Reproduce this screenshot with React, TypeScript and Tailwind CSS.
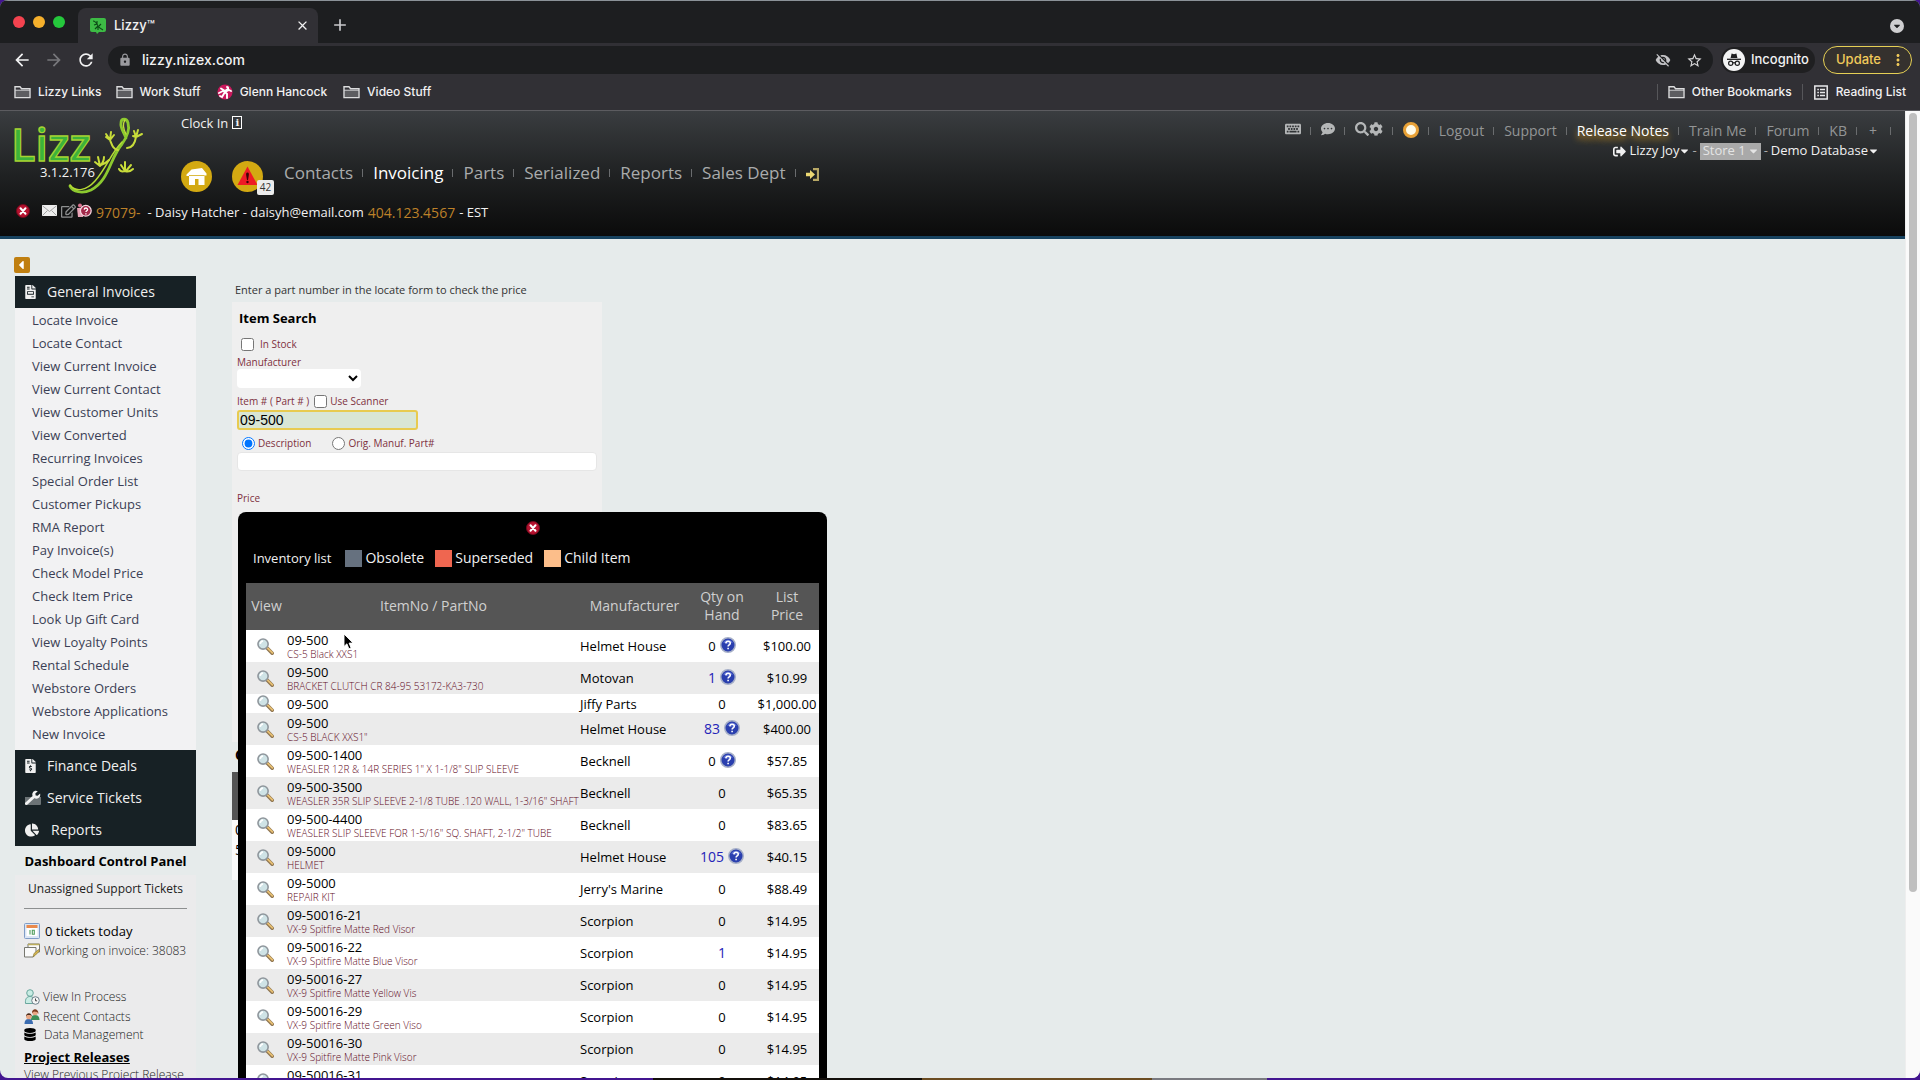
import React from "react";
import {
  FaCaretDown,
  FaCog,
  FaCommentDots,
  FaDatabase,
  FaKeyboard,
  FaSearch,
  FaSignOutAlt,
  FaChartPie,
  FaFileInvoice,
  FaFileInvoiceDollar,
  FaRegEdit,
} from "react-icons/fa";
import {
  MdArrowBack,
  MdArrowForward,
  MdRefresh,
  MdLock,
  MdVisibilityOff,
  MdStarBorder,
  MdClose,
  MdAdd,
  MdMoreVert,
} from "react-icons/md";

/* ---------- icons ---------- */

function Folder() {
  return (
    <svg className="h-[14px] w-[17px]" viewBox="0 0 17 14" fill="none" stroke="#dcdcde" strokeWidth="1.4">
      <path d="M1.500 5h14v7h-14z" fill="#5d5d61" stroke="none" />
      <path d="M1 12.600V1.800h5l1.600 1.900H16v8.900H1z" />
      <path d="M1 5.200h15" strokeWidth="0.900" />
    </svg>
  );
}

function ReadingListIcon() {
  return (
    <svg className="h-[15px] w-[14px]" viewBox="0 0 14 15" fill="none" stroke="#e8e8ea" strokeWidth="1.5">
      <rect x="0.8" y="1" width="12.4" height="13" />
      <path d="M3.3 4.5h1.6M3.3 7.5h1.6M3.3 10.5h1.6M6 4.5h5M6 7.5h5M6 10.5h5" />
    </svg>
  );
}

function Favicon() {
  return (
    <svg className="h-4 w-4" viewBox="0 0 16 16">
      <path d="M2 0h12a2 2 0 0 1 2 2v10a2 2 0 0 1-2 2H9l-2 2-1-2H2a2 2 0 0 1-2-2V2a2 2 0 0 1 2-2z" fill="#3dbb45" />
      <path d="M3 3c3 0 4 3 5 5s3 3 5 4M7 3v3l-3 1M11 6l-2 2M5 11l3-3M8 8v4" stroke="#0c4a16" strokeWidth="1.1" fill="none" />
    </svg>
  );
}

function GlennIcon() {
  return (
    <svg className="h-4 w-4" viewBox="0 0 16 16">
      <circle cx="8" cy="8" r="7.6" fill="#c9185c" />
      <path d="M10 3c1.5 0 1.6 2 .3 2.4L8 7 4 4.5M2 9l4-2 2 1 4-2 2 1M8 8l-3 5-2-1M8 8l2 2v4" stroke="#fff" strokeWidth="1.9" fill="none" strokeLinecap="round" />
    </svg>
  );
}

function IncognitoIcon() {
  return (
    <svg className="h-[22px] w-[22px]" viewBox="0 0 22 22">
      <circle cx="11" cy="11" r="11" fill="#f3f3f4" />
      <path d="M7.6 9l1-4.4 2.4.6 2.4-.6 1 4.400z" fill="#1f1f21" />
      <path d="M4 10.300h14" stroke="#1f1f21" strokeWidth="1.300" />
      <g fill="none" stroke="#1f1f21" strokeWidth="1.200">
        <circle cx="7.700" cy="14.300" r="2.100" />
        <circle cx="14.300" cy="14.300" r="2.100" />
        <path d="M9.800 14c.8-.6 1.600-.6 2.400 0" />
      </g>
    </svg>
  );
}

function Logo() {
  return (
    <svg className="h-[86px] w-[140px]" viewBox="0 0 140 86" role="img" aria-label="Lizzy">
      <text
        x="6"
        y="50"
        fontFamily="'Open Sans', sans-serif"
        fontWeight="600"
        fontSize="45"
        fill="#3db33a"
        stroke="#a5d432"
        strokeWidth="1.300"
      >
        Lizz
      </text>
      <g fill="none" strokeLinecap="round" transform="translate(-4 -2)">
        <path d="M69 77c3 6 12 8 21 4 18-9 19-32 31-46 5-7 8-14 6-21-1-5-7-5-7 0-1 5 3 9 5 15" stroke="#8cc92f" strokeWidth="2.800" />
        <path d="M69 76c6 8 17 5 25-4 12-14 16-28 27-39" stroke="#b6dc34" strokeWidth="1.500" />
        <path d="M124 11c-3 4-1 10 1 14" stroke="#c3de3a" strokeWidth="1.300" />
        <path d="M117 41c-5-1-6-5-8-10M109 31l-4-6M109 31l1-8M109 31l4-5M109 31l-4-3" stroke="#c8dc3a" strokeWidth="2" />
        <path d="M126 39c6 0 8-5 9-11M135 28l-2-6M135 28l2-7M135 28l6-3M135 28l-3-1" stroke="#c8dc3a" strokeWidth="2" />
        <path d="M99 57l-2-9M99 57c3-3 4-6 4-9M100 56c3-1 6-3 8-5M99 57l-5-4" stroke="#c8dc3a" strokeWidth="2" />
        <path d="M124 62l-4-6M124 62v-9M125 62l5-6M124 62c-3 1-5 0-6-2M124 62c3 1 6 0 8-2" stroke="#c8dc3a" strokeWidth="2" />
      </g>
      <text x="35" y="66" fontFamily="'Open Sans', sans-serif" fontSize="13" fill="#f4f4f4">
        3.1.2.176
      </text>
    </svg>
  );
}

function HomeIcon() {
  return (
    <svg className="h-[31px] w-[31px]" viewBox="0 0 31 31">
      <circle cx="15.500" cy="15.500" r="15.500" fill="#d3a912" />
      <path d="M5.500 13.500l5-5L21 7l4.500 5.500v2h-2V24h-6v-6h-3.500v6H8v-9H5.500z" fill="#fff" />
      <path d="M8 14.500h15.500" stroke="#d3a912" strokeWidth="0.800" />
    </svg>
  );
}

function AlertIcon() {
  return (
    <svg className="h-[31px] w-[31px]" viewBox="0 0 31 31">
      <circle cx="15.500" cy="15.500" r="15.500" fill="#d3a912" />
      <path d="M15.500 5.500L25.500 24h-20z" fill="#ee1c25" />
      <path d="M15.500 11.500c1.500 0 1.600 1.500 1.200 3.500l-.7 4h-1l-.7-4c-.4-2-.3-3.500 1.200-3.500z" fill="#3a0507" />
      <circle cx="15.500" cy="21" r="1.200" fill="#3a0507" />
    </svg>
  );
}

function ExitIcon() {
  return (
    <svg className="h-[13px] w-[13px]" viewBox="0 0 13 13">
      <path d="M7 1.200h5v10.600H7" fill="none" stroke="#b7a765" strokeWidth="2.200" />
      <path d="M0 4.800h4V2l5 4.500L4 11V8.200H0z" fill="#ecd873" />
    </svg>
  );
}

function CloseBadge() {
  return (
    <svg className="h-[14px] w-[14px]" viewBox="0 0 14 14">
      <circle cx="7" cy="7" r="6.500" fill="#b5122f" stroke="#6e0a1c" />
      <path d="M4.500 4.300l5 5.400M9.500 4.300l-5 5.400" stroke="#fff" strokeWidth="2" strokeLinecap="round" />
    </svg>
  );
}

function MailIcon() {
  return (
    <svg className="h-[11px] w-[15px]" viewBox="0 0 15 11">
      <rect width="15" height="11" fill="#ededed" />
      <path d="M.5.800l7 5.700 7-5.700M.5 10.500l5-5M14.500 10.500l-5-5" stroke="#9a9a9a" fill="none" strokeWidth="0.900" />
    </svg>
  );
}

function HelpPerson() {
  return (
    <svg className="h-[15px] w-[15px]" viewBox="0 0 15 15">
      <circle cx="3" cy="2.500" r="2" fill="#d8728e" />
      <path d="M0 5h6v9H1z" fill="#e7a3b6" />
      <circle cx="8.800" cy="7.800" r="5.400" fill="#a3294a" stroke="#f3d5dd" strokeWidth="1.300" />
      <path d="M7.200 6.600c.1-2.200 3.500-2 3.400-.1 0 1.300-1.700 1.100-1.700 2.600M8.900 10.200v1.200" stroke="#fff" strokeWidth="1.300" fill="none" />
    </svg>
  );
}

function HelpIcon() {
  return (
    <svg className="mb-0.5 h-4 w-4" viewBox="0 0 15 15">
      <circle cx="7.500" cy="7.500" r="6.800" fill="#2a3fae" stroke="#a7b0c8" strokeWidth="1.400" />
      <path d="M3 5.500a5 5 0 0 1 9 0 8 4 0 0 1-9 0z" fill="#6c80de" opacity="0.700" />
      <path d="M5.500 6c.1-2.700 4.200-2.600 4.100-.2 0 1.600-2 1.400-2 3M7.600 10v1.500" stroke="#fff" strokeWidth="1.500" fill="none" />
    </svg>
  );
}

function MagnifierIcon() {
  return (
    <svg className="h-[17px] w-[17px]" viewBox="0 0 16 16">
      <path d="M9.500 9.500l4.800 4.800" stroke="#8d7450" strokeWidth="3.400" strokeLinecap="round" />
      <path d="M10 9.500l4.500 4.500" stroke="#e7bf72" strokeWidth="1.700" strokeLinecap="round" />
      <circle cx="5.700" cy="5.700" r="4.800" fill="#cfe3e6" stroke="#8f969c" strokeWidth="1.500" />
      <path d="M3 5.500c.3-1.500 1.200-2.400 2.700-2.600" stroke="#fff" strokeWidth="1.500" fill="none" />
    </svg>
  );
}

function ServiceIcon() {
  return (
    <svg className="h-4 w-4" viewBox="0 0 16 16">
      <path d="M0 7h16v7a1 1 0 0 1-1 1H1a1 1 0 0 1-1-1z" fill="#6c7376" />
      <path d="M1.500 13.500l6.500-6" stroke="#f2f2f2" strokeWidth="3" strokeLinecap="round" />
      <path d="M12.800 1.300l-2.500 2.200.4 1.900 2 .3 2.400-2.100c.5 2-.2 3.600-1.600 4.500-1.500 1-3.400.7-4.700-.3-1.800-1.700-2-4-.8-5.600 1.100-1.400 3-1.900 4.800-.9z" fill="#f2f2f2" />
    </svg>
  );
}

function CalendarIcon() {
  return (
    <svg className="h-4 w-4 shrink-0" viewBox="0 0 16 16">
      <rect x="0.500" y="0.500" width="15" height="15" rx="1" fill="#dbe6f5" stroke="#7f9cc6" />
      <rect x="2.500" y="2" width="11" height="3" fill="#e98a4d" />
      <rect x="2.500" y="5" width="11" height="8" fill="#fff" />
      <path d="M6 7v4.500M8.300 7.300h2v4h-2z" stroke="#4f9d5d" strokeWidth="1.100" fill="none" />
    </svg>
  );
}

function NotesIcon() {
  return (
    <svg className="h-4 w-4 shrink-0" viewBox="0 0 16 16" fill="#fafafa" stroke="#77776f">
      <path d="M4 1h11.500v8H4z" />
      <path d="M4 1.500h11.500" stroke="#bcae5c" strokeWidth="1.500" />
      <path d="M.5 4.500H12V11l-3 3H.5z" />
      <path d="M9 14l1-3.500 4.500-4 1 1.500-4.500 4.500z" fill="#d9b84f" stroke="#8a7b3d" strokeWidth="0.700" />
    </svg>
  );
}

function ProcessIcon() {
  return (
    <svg className="h-4 w-4 shrink-0" viewBox="0 0 16 16" fill="#c9ece4" stroke="#6aa79e">
      <path d="M1.500 14.500c-.5-5 1.500-7 4.500-7s5 2 4.500 7z" />
      <circle cx="6" cy="4" r="3.300" />
      <circle cx="11.500" cy="11.500" r="3.800" fill="#f6f6f6" stroke="#6c7f8a" />
      <path d="M11.500 9.500v2.300h1.600" fill="none" stroke="#444" />
    </svg>
  );
}

function PeopleIcon() {
  return (
    <svg className="h-4 w-4 shrink-0" viewBox="0 0 16 16">
      <path d="M7 11c0-4 2-5 4-5s4.500 1 4.500 5z" fill="#3d8f57" />
      <circle cx="11" cy="3.500" r="2.800" fill="#e8a684" />
      <path d="M8 4c0-5 6.500-5 6.500 1l-1.300-2-3.200-.5z" fill="#7d3b1f" />
      <path d="M.5 15c0-4 2-5 4.200-5s4.300 1 4.300 5z" fill="#3a6bb0" />
      <circle cx="4.800" cy="7.500" r="2.800" fill="#e8a684" />
      <path d="M2 7.500c0-4.500 5.800-4.500 5.800 0L6.500 6H3.200z" fill="#4a2c1c" />
    </svg>
  );
}

function PointerIcon() {
  return (
    <svg className="h-[18px] w-[12px]" viewBox="0 0 12 18">
      <path d="M1 1v12.500l2.900-2.700 2 5 2.200-.9-2-4.800h4z" fill="#000" stroke="#fff" strokeWidth="0.900" />
    </svg>
  );
}

/* ---------- data ---------- */

const mainNav = ["Contacts", "Invoicing", "Parts", "Serialized", "Reports", "Sales Dept"];
const utilNav = ["Logout", "Support", "Release Notes", "Train Me", "Forum", "KB", "+"];

const invoiceLinks = [
  "Locate Invoice",
  "Locate Contact",
  "View Current Invoice",
  "View Current Contact",
  "View Customer Units",
  "View Converted",
  "Recurring Invoices",
  "Special Order List",
  "Customer Pickups",
  "RMA Report",
  "Pay Invoice(s)",
  "Check Model Price",
  "Check Item Price",
  "Look Up Gift Card",
  "View Loyalty Points",
  "Rental Schedule",
  "Webstore Orders",
  "Webstore Applications",
  "New Invoice",
];

type Item = { no: string; desc: string; maker: string; qty: number; help?: boolean; price: string };

const items: Item[] = [
  { no: "09-500", desc: "CS-5 Black XXS1", maker: "Helmet House", qty: 0, help: true, price: "$100.00" },
  { no: "09-500", desc: "BRACKET CLUTCH CR 84-95 53172-KA3-730", maker: "Motovan", qty: 1, help: true, price: "$10.99" },
  { no: "09-500", desc: "", maker: "Jiffy Parts", qty: 0, price: "$1,000.00" },
  { no: "09-500", desc: 'CS-5 BLACK XXS1"', maker: "Helmet House", qty: 83, help: true, price: "$400.00" },
  { no: "09-500-1400", desc: 'WEASLER 12R & 14R SERIES 1" X 1-1/8" SLIP SLEEVE', maker: "Becknell", qty: 0, help: true, price: "$57.85" },
  { no: "09-500-3500", desc: 'WEASLER 35R SLIP SLEEVE 2-1/8 TUBE .120 WALL, 1-3/16" SHAFT', maker: "Becknell", qty: 0, price: "$65.35" },
  { no: "09-500-4400", desc: 'WEASLER SLIP SLEEVE FOR 1-5/16" SQ. SHAFT, 2-1/2" TUBE', maker: "Becknell", qty: 0, price: "$83.65" },
  { no: "09-5000", desc: "HELMET", maker: "Helmet House", qty: 105, help: true, price: "$40.15" },
  { no: "09-5000", desc: "REPAIR KIT", maker: "Jerry's Marine", qty: 0, price: "$88.49" },
  { no: "09-50016-21", desc: "VX-9 Spitfire Matte Red Visor", maker: "Scorpion", qty: 0, price: "$14.95" },
  { no: "09-50016-22", desc: "VX-9 Spitfire Matte Blue Visor", maker: "Scorpion", qty: 1, price: "$14.95" },
  { no: "09-50016-27", desc: "VX-9 Spitfire Matte Yellow Vis", maker: "Scorpion", qty: 0, price: "$14.95" },
  { no: "09-50016-29", desc: "VX-9 Spitfire Matte Green Viso", maker: "Scorpion", qty: 0, price: "$14.95" },
  { no: "09-50016-30", desc: "VX-9 Spitfire Matte Pink Visor", maker: "Scorpion", qty: 0, price: "$14.95" },
  { no: "09-50016-31", desc: "VX-9 Spitfire Matte", maker: "Scorpion", qty: 0, price: "$14.95" },
];

/* ---------- browser frame ---------- */

function BrowserChrome() {
  return (
    <div className="shrink-0 border-b border-[#5c5c60] bg-[#313035] font-['Inter',sans-serif] text-[#f1f1f2]">
      <div className="flex h-[43px] items-end border-t border-[#8b9298] bg-[#1d1e20]">
        <div className="flex h-[43px] items-center gap-2 pr-[13px] pl-[13px]">
          <span className="h-3 w-3 rounded-full bg-[#f4434f]" />
          <span className="h-3 w-3 rounded-full bg-[#f6b02c]" />
          <span className="h-3 w-3 rounded-full bg-[#25c83c]" />
        </div>
        <div className="flex h-[35px] w-[240px] items-center rounded-t-lg bg-[#313035] pr-2 pl-3">
          <Favicon />
          <span className="ml-2 flex-1 text-[13px] font-medium">Lizzy™</span>
          <button aria-label="Close tab">
            <MdClose className="h-[15px] w-[15px]" />
          </button>
        </div>
        <button aria-label="New tab" className="mb-2 ml-3">
          <MdAdd className="h-5 w-5 text-[#c9c9cc]" />
        </button>
        <button aria-label="Search tabs" className="mr-4 mb-2.5 ml-auto flex h-[14px] w-[14px] items-center justify-center rounded-full bg-[#cfcfd1] text-[#1d1e20]">
          <FaCaretDown className="h-2.5 w-2.5" />
        </button>
      </div>
      <div className="flex h-[34px] items-center pr-2 pl-3">
        <button aria-label="Back"><MdArrowBack className="h-5 w-5" /></button>
        <button aria-label="Forward" className="ml-3"><MdArrowForward className="h-5 w-5 text-[#77777b]" /></button>
        <button aria-label="Reload" className="ml-3"><MdRefresh className="h-5 w-5" /></button>
        <div className="ml-3 flex h-7 flex-1 items-center rounded-full bg-[#1d1e20] px-[10px]">
          <MdLock className="h-[14px] w-[14px] text-[#9a9a9e]" />
          <input aria-label="Address" className="ml-2.5 flex-1 bg-transparent text-sm font-medium outline-none" defaultValue="lizzy.nizex.com" />
          <MdVisibilityOff className="h-4 w-4 text-[#c4c4c7]" />
          <MdStarBorder className="ml-[15px] h-[17px] w-[17px] text-[#d6d6d8]" />
        </div>
        <div className="ml-2 flex h-[26px] items-center gap-1.5 rounded-full bg-[#1f1f21] pr-1.5 pl-0.5">
          <IncognitoIcon />
          <span className="text-[13px] font-medium">Incognito</span>
        </div>
        <button className="ml-2 flex h-7 items-center gap-2 rounded-full border border-[#e5cf55] bg-[#35312e] pr-1 pl-3 text-[13px] font-medium text-[#f0c95a]">
          Update <MdMoreVert className="h-[18px] w-[18px]" />
        </button>
      </div>
      <nav className="flex h-[33px] items-center pr-[14px] pb-[3px] pl-[14px] text-xs font-medium">
        <a href="#" className="flex items-center gap-[7px]"><Folder />Lizzy Links</a>
        <a href="#" className="ml-[14px] flex items-center gap-[7px]"><Folder />Work Stuff</a>
        <a href="#" className="ml-4 flex items-center gap-[7px]"><GlennIcon />Glenn Hancock</a>
        <a href="#" className="ml-4 flex items-center gap-[7px]"><Folder />Video Stuff</a>
        <a href="#" className="ml-auto flex h-4 items-center gap-[7px] border-l border-[#56565a] pl-2.5"><Folder />Other Bookmarks</a>
        <a href="#" className="ml-2.5 flex h-4 items-center gap-2 border-l border-[#56565a] pl-[11px]"><ReadingListIcon />Reading List</a>
      </nav>
    </div>
  );
}

/* ---------- app header ---------- */

function Divider() {
  return <span className="mr-[10px] ml-[9px] h-2 w-px bg-[#6a6c6e]" />;
}

function TopHeader() {
  return (
    <header className="flex h-[128px] shrink-0 flex-col border-b-[3px] border-[#17425f] bg-linear-to-b from-[#3a3d40] via-[#202223] to-[#0b0b0b] text-[#f1f1f1]">
      <div className="flex h-[86px]">
        <a href="#" className="w-[181px] pl-[5px]"><Logo /></a>
        <div className="flex flex-col">
          <a href="#" className="mt-[3px] flex items-center gap-1 text-[13px] leading-[18px]">
            Clock In
            <span className="mb-px flex h-[13px] w-[10px] items-center justify-center border border-white font-['DejaVu_Serif',serif] text-[10px] font-bold">i</span>
          </a>
          <nav className="mt-[21px] flex items-center text-[17px] leading-[31px] text-[#a9abac]">
            <a href="#" aria-label="Home" className="mt-2"><HomeIcon /></a>
            <a href="#" aria-label="Alerts" className="relative mt-2 mr-[21px] ml-5">
              <AlertIcon />
              <span className="absolute top-[19px] left-[25px] flex h-[15px] w-[17px] items-center justify-center rounded-xs bg-[#ececec] text-[10px] text-[#333]">42</span>
            </a>
            {mainNav.map((label) => (
              <React.Fragment key={label}>
                <a href="#" className={label === "Invoicing" ? "font-medium text-white" : ""}>{label}</a>
                <Divider />
              </React.Fragment>
            ))}
            <a href="#" aria-label="Exit" className="mt-1"><ExitIcon /></a>
          </nav>
        </div>
        <div className="ml-auto flex flex-col items-end pt-[10px] pr-1">
          <nav className="flex h-[19px] items-center text-sm text-[#939596]">
            <FaKeyboard className="mb-1 h-4 w-4 text-[#b4b6b7]" />
            <Divider />
            <FaCommentDots className="mb-1 h-[14px] w-[14px] text-[#b4b6b7]" />
            <Divider />
            <FaSearch className="mb-1 h-[14px] w-[14px] text-[#b4b6b7]" />
            <FaCog className="mb-1 h-[14px] w-[14px] text-[#b4b6b7]" />
            <Divider />
            <span className="mb-0.5 h-4 w-4 rounded-full border-[3px] border-[#e8a136] bg-[#fffbe8]" />
            <Divider />
            {utilNav.map((label) => (
              <React.Fragment key={label}>
                <a
                  href="#"
                  className={label === "Release Notes" ? "font-medium text-white [text-shadow:0_4px_6px_#d89a1c]" : label === "+" ? "pr-1 pl-0.5" : ""}
                >
                  {label}
                </a>
                <Divider />
              </React.Fragment>
            ))}
          </nav>
          <div className="mt-px mr-[23px] flex h-5 items-center gap-[3px] text-[13px]">
            <FaSignOutAlt className="h-[13px] w-[13px]" />
            <button className="flex items-center gap-px">Lizzy Joy <FaCaretDown className="h-3 w-[9px]" /></button>
            <span className="text-[#aaa]">-</span>
            <button className="flex h-[17px] items-center gap-[3px] bg-[#a9a9a9] px-[3px] text-[#e4e4e4]">Store 1 <FaCaretDown className="h-3 w-[9px]" /></button>
            <span className="text-[#aaa]">-</span>
            <button className="flex items-center gap-px">Demo Database <FaCaretDown className="h-3 w-[9px]" /></button>
          </div>
        </div>
      </div>
      <div className="flex h-[31px] items-center pl-4 text-[13px]">
        <button aria-label="Clear contact" className="mb-1"><CloseBadge /></button>
        <span className="mb-1 ml-3 flex items-center"><MailIcon /></span>
        <FaRegEdit className="mb-1 ml-1 h-[14px] w-[15px] text-[#8d8f90]" />
        <span className="mb-1 ml-px"><HelpPerson /></span>
        <a href="#" className="ml-1 text-sm text-[#bd8129]">97079-</a>
        <span className="ml-[7px]">- Daisy Hatcher - daisyh@email.com</span>
        <a href="#" className="mx-1 text-sm text-[#bd8129]">404.123.4567</a>
        <span>- EST</span>
      </div>
    </header>
  );
}

/* ---------- sidebar ---------- */

function SectionTitle({ icon, children }: { icon: React.ReactNode; children: React.ReactNode }) {
  return (
    <button className="flex h-8 w-full items-center gap-1.5 bg-[#172125] px-2.5 text-left text-sm text-[#f0f0f0]">
      <span className="flex min-w-4 shrink-0">{icon}</span>
      {children}
    </button>
  );
}

function Sidebar() {
  return (
    <aside className="w-[181px] shrink-0">
      <button aria-label="Collapse menu" className="mt-[18px] -ml-px flex h-4 w-4 items-center justify-center rounded-xs bg-[#c07f10] text-white">
        <FaCaretDown className="h-[14px] w-[14px] rotate-90" />
      </button>
      <div className="mt-[3px]">
        <SectionTitle icon={<FaFileInvoice className="h-[14px] w-[11px]" />}>General Invoices</SectionTitle>
      </div>
      <ul className="bg-[#f2f2f3] pt-px pb-1">
        {invoiceLinks.map((label) => (
          <li key={label} className="h-[23px] pl-[17px] text-[13px] leading-[23px] text-[#3b3f55]">
            <a href="#">{label}</a>
          </li>
        ))}
      </ul>
      <SectionTitle icon={<FaFileInvoiceDollar className="h-[14px] w-[11px]" />}>Finance Deals</SectionTitle>
      <SectionTitle icon={<ServiceIcon />}>Service Tickets</SectionTitle>
      <SectionTitle icon={<FaChartPie className="mr-1.5 h-[14px] w-[14px]" />}>Reports</SectionTitle>
      <h2 className="h-[29px] text-center text-[13px] leading-[31px] font-bold text-black">Dashboard Control Panel</h2>
      <div className="bg-[#ebebec] px-[9px] pt-1 text-xs leading-5 text-[#222]">
        <a href="#" className="block text-center">Unassigned Support Tickets</a>
        <hr className="mt-[9px] mb-3 border-[#8d8f90]" />
        <p className="flex items-center gap-[5px] text-[13px] leading-5 text-black"><CalendarIcon />0 tickets today</p>
        <a href="#" className="flex items-center gap-1 whitespace-nowrap font-light"><NotesIcon />Working on invoice: 38083</a>
        <a href="#" className="mt-[26px] flex items-center gap-[3px] font-light"><ProcessIcon />View In Process</a>
        <a href="#" className="flex items-center gap-[3px] font-light"><PeopleIcon />Recent Contacts</a>
        <a href="#" className="flex h-[15px] items-center gap-2 font-light"><FaDatabase className="h-[13px] w-3 text-black" />Data Management</a>
        <h3 className="mt-[5px] text-[13px] leading-5 font-bold text-black underline">Project Releases</h3>
        <a href="#" className="block whitespace-nowrap leading-4 font-light">View Previous Project Release</a>
      </div>
    </aside>
  );
}

/* ---------- content ---------- */

function SearchForm() {
  const field = "flex items-center gap-[3px]";
  return (
    <form className="flex h-[440px] flex-col bg-[#efefef] pl-[5px] text-[10px] leading-[14px] text-[#7e3040]" onSubmit={(e) => e.preventDefault()}>
      <h1 className="mt-1.5 pl-[2px] text-[13px] leading-5 font-bold text-black">Item Search</h1>
      <label className="mt-[9px] flex h-[14px] items-center gap-[6px] pl-1">
        <input type="checkbox" className="h-[13px] w-[13px]" />In Stock
      </label>
      <label htmlFor="maker" className="mt-1">Manufacturer</label>
      <select id="maker" className="h-[19px] w-[124px] rounded-sm bg-white text-black">
        <option> </option>
      </select>
      <div className="mt-[5px] flex h-4 items-center gap-[5px]">
        <label htmlFor="part">Item # ( Part # )</label>
        <label className={field}><input type="checkbox" className="h-[13px] w-[13px]" />Use Scanner</label>
      </div>
      <input
        id="part"
        autoFocus
        defaultValue="09-500"
        className="mt-px h-5 w-[181px] rounded-[3px] border-2 border-[#e8cb50] bg-[#d9e6d5] px-px font-['Liberation_Sans',sans-serif] text-sm leading-4 text-black outline-none"
      />
      <div className="mt-[5px] flex h-4 items-center gap-[21px] pl-[5px]">
        <label className={field}><input type="radio" name="by" defaultChecked className="h-[13px] w-[13px]" />Description</label>
        <label className={field}><input type="radio" name="by" className="h-[13px] w-[13px]" />Orig. Manuf. Part#</label>
      </div>
      <input aria-label="Search text" className="mt-px h-[19px] w-[360px] rounded-sm border border-[#e6e6e6] bg-white" />
      <p className="mt-5">Price</p>
    </form>
  );
}

function Legend({ color, label }: { color: string; label: string }) {
  return (
    <span className="flex items-center gap-[3px]">
      <span className="h-[17px] w-[17px]" style={{ backgroundColor: color }} />
      {label}
    </span>
  );
}

function InventoryPopup() {
  return (
    <section className="absolute top-[273px] left-[238px] w-[589px] rounded-t-lg bg-black px-2 text-[13px] leading-4">
      <button aria-label="Close list" className="mx-auto mt-[9px] flex h-[14px]"><CloseBadge /></button>
      <div className="mt-[14px] flex h-[18px] items-center gap-[11px] pl-[7px] text-sm text-[#f1f1f1]">
        <span className="mr-[3px] text-[13px]">Inventory list</span>
        <Legend color="#66717f" label="Obsolete" />
        <Legend color="#ef6650" label="Superseded" />
        <Legend color="#fcbe8a" label="Child Item" />
      </div>
      <table className="mt-4 w-full table-fixed border-collapse bg-white">
        <thead>
          <tr className="h-[47px] bg-[#555] text-center text-sm leading-[18px] text-[#d0d0d0]">
            <th className="w-[41px] pt-0 pb-0.5 font-normal">View</th>
            <th className="w-[293px] pt-0 pb-0.5 font-normal">ItemNo / PartNo</th>
            <th className="w-[109px] pt-0 pb-0.5 font-normal">Manufacturer</th>
            <th className="w-[66px] px-2 pt-0 pb-0.5 font-normal">Qty on Hand</th>
            <th className="px-3 pt-0 pb-0.5 font-normal">List Price</th>
          </tr>
        </thead>
        <tbody>
          {items.map((it, i) => (
            <tr key={i} className="whitespace-nowrap text-black odd:bg-white even:bg-[#ebebeb]">
              <td><button aria-label="View item" className="ml-[11px] flex"><MagnifierIcon /></button></td>
              <td className="pt-0.5 pb-px">
                <div className="leading-4">{it.no}</div>
                {it.desc && <div className="text-[10px] leading-[13px] font-light text-[#5f0a24]">{it.desc}</div>}
              </td>
              <td>{it.maker}</td>
              <td>
                <span className={it.qty ? "flex items-center justify-center gap-1 text-sm leading-4 text-[#2424b8]" : "flex items-center justify-center gap-1"}>
                  {it.qty}
                  {it.help && <HelpIcon />}
                </span>
              </td>
              <td className="text-center">{it.price}</td>
            </tr>
          ))}
        </tbody>
      </table>
    </section>
  );
}

function Content() {
  return (
    <main className="ml-9 flex-1">
      <div className="w-[370px]">
        <p className="mt-[41px] mb-[3px] h-[19px] pl-[3px] text-[11px] leading-[19px] text-[#333]">
          Enter a part number in the locate form to check the price
        </p>
        <SearchForm />
        <div className="h-[30px] pt-[3px] pl-[3px] text-sm leading-5 font-bold">C</div>
        <div className="h-12 bg-[#555]" />
        <div className="h-[60px] bg-[#fafafa] pl-[3px] text-sm leading-5">
          <p>0</p>
          <p>5</p>
        </div>
      </div>
    </main>
  );
}

export default function App() {
  return (
    <div className="flex h-screen flex-col overflow-hidden bg-[#431590] font-['Open_Sans',sans-serif]">
      <div className="flex min-h-0 flex-1 flex-col overflow-hidden rounded-lg bg-[#e6ebeb]">
        <BrowserChrome />
        <div className="flex min-h-0 flex-1">
          <div className="relative flex min-w-0 flex-1 flex-col overflow-hidden">
            <TopHeader />
            <div className="relative flex min-h-0 flex-1 overflow-visible pl-[15px]">
              <Sidebar />
              <Content />
              <InventoryPopup />
              <span className="absolute top-[394px] left-[343px]"><PointerIcon /></span>
            </div>
          </div>
          <div className="w-[15px] shrink-0 border-l border-[#eee] bg-[#fafafa] pt-0.5">
            <div className="mx-auto h-[779px] w-2 rounded-full bg-[#bfbfbf]" />
          </div>
        </div>
      </div>
      <div className="flex h-0.5 shrink-0">
        <span className="w-[34%]" />
        <span className="w-[14%] bg-[#14100c]" />
        <span className="w-[12%] bg-[#6b4c22]" />
        <span className="w-[6%] bg-[#7a7a80]" />
      </div>
    </div>
  );
}
